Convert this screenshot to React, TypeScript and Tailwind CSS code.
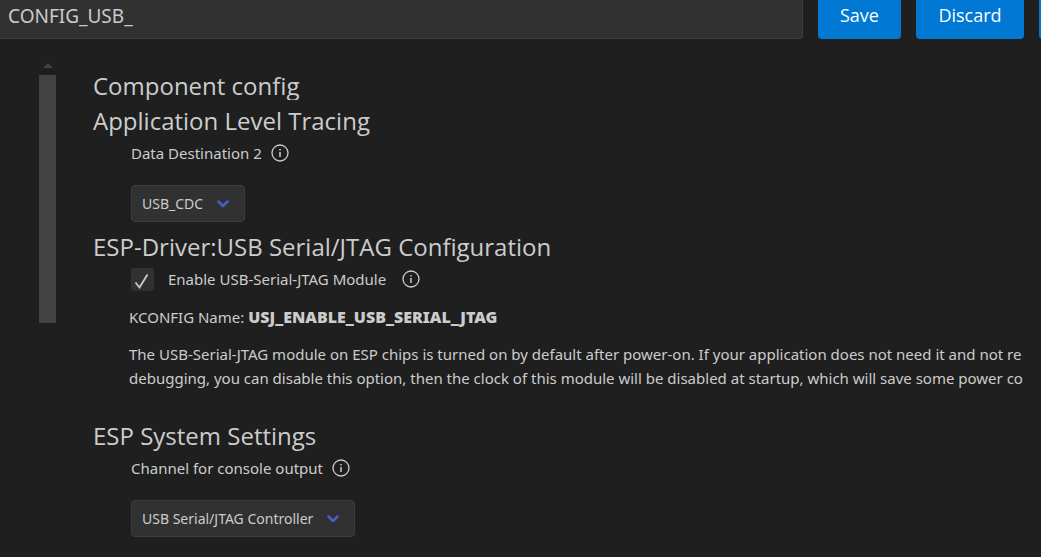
import React, { useState } from 'react';

const InfoIcon: React.FC = () => (
  <svg viewBox="0 0 18 18" className="size-[18px] shrink-0" fill="none" aria-hidden="true">
    <circle cx="9" cy="9" r="8" stroke="#cccccc" strokeWidth="1.3" />
    <path d="M9 8v5" stroke="#cccccc" strokeWidth="1.5" />
    <path d="M9 5v1.5" stroke="#cccccc" strokeWidth="1.5" />
  </svg>
);

const Heading: React.FC<{ children: React.ReactNode }> = ({ children }) => (
  <h2 className="whitespace-nowrap font-['Open_Sans',sans-serif] text-[24px] leading-[36px]">{children}</h2>
);

interface SelectSettingProps {
  id: string;
  label: string;
  option: string;
}

const SelectSetting: React.FC<SelectSettingProps> = ({ id, label, option }) => (
  <div className="pl-[37px]">
    <div className="flex h-[28px] items-center gap-[9px]">
      <label htmlFor={id}>{label}</label>
      <InfoIcon />
    </div>
    <div className="relative mt-[18px] inline-block">
      <select
        id={id}
        className="block h-[37px] appearance-none rounded border border-[#3c3c3c] bg-[#313131] pl-[10px] pr-10 text-[14px]"
      >
        <option>{option}</option>
      </select>
      <svg
        viewBox="0 0 12 8"
        className="pointer-events-none absolute right-4 top-[15px] h-2 w-3"
        fill="none"
        aria-hidden="true"
      >
        <path d="M1.5 1.5 6 6l4.500-4.500" stroke="#485fc7" strokeWidth="2.500" strokeLinecap="round" strokeLinejoin="round" />
      </svg>
    </div>
  </div>
);

const buttonClass = "h-[39px] shrink-0 rounded-b bg-[#0078d4] pb-2 font-['Open_Sans',sans-serif] text-[18px] text-white";

export default function App() {
  const [search, setSearch] = useState('CONFIG_USB_');
  const [enabled, setEnabled] = useState(true);

  return (
    <div className="min-h-screen overflow-hidden bg-[#1f1f1f] font-['Noto_Sans','Open_Sans',sans-serif] text-[15px] text-[#cccccc]">
      <header className="-mr-[81px] flex gap-[15px]">
        <input
          type="text"
          aria-label="Search parameter"
          value={search}
          onChange={(e) => setSearch(e.target.value)}
          className="h-[39px] min-w-0 flex-1 rounded-br border-b border-r border-[#3c3c3c] bg-[#313131] pb-[6px] pl-2 text-[19px] outline-none"
        />
        <button type="button" className={`${buttonClass} w-[83px]`}>Save</button>
        <button type="button" className={`${buttonClass} w-[108px]`}>Discard</button>
        <button type="button" aria-label="Reset" className={`${buttonClass} w-[83px]`} />
      </header>

      <div className="flex pl-[39px] pt-6">
        <div className="flex w-[17px] shrink-0 flex-col items-center">
          <svg viewBox="0 0 10 5" className="mb-[7px] h-[5px] w-[10px]" aria-hidden="true">
            <path d="M5 0 10 5H0z" fill="#424242" />
          </svg>
          <div className="h-[248px] w-full bg-[#424242]" />
        </div>

        <main className="min-w-0 flex-1 pl-[37px] pt-[5px]">
          <h1 className="h-[32px] overflow-hidden whitespace-nowrap font-['Open_Sans',sans-serif] text-[24px] leading-[36px]">
            Component config
          </h1>

          <section className="mt-[3px]">
            <Heading>Application Level Tracing</Heading>
            <div className="pl-px">
              <SelectSetting id="data-destination" label="Data Destination 2" option="USB_CDC" />
            </div>
          </section>

          <section className="mt-[7px]">
            <Heading>ESP-Driver:USB Serial/JTAG Configuration</Heading>
            <div className="flex h-[28px] items-center pl-[38px]">
              <span className="relative mr-[14px] size-[23px]">
                <input
                  id="enable-usj"
                  type="checkbox"
                  checked={enabled}
                  onChange={(e) => setEnabled(e.target.checked)}
                  className="block size-[23px] appearance-none rounded-[3px] bg-[#313131]"
                />
                {enabled && (
                  <svg viewBox="0 0 23 23" className="pointer-events-none absolute inset-0" fill="none" aria-hidden="true">
                    <path d="M4.500 14.500 8.500 19.500 16.500 6.500" stroke="#cccccc" strokeWidth="1.8" />
                  </svg>
                )}
              </span>
              <label htmlFor="enable-usj" className="mr-4">Enable USB-Serial-JTAG Module</label>
              <InfoIcon />
            </div>
            <div className="whitespace-nowrap pl-9 pt-3 leading-6">
              <p>
                KCONFIG Name: <strong className="text-[16px] font-black">USJ_ENABLE_USB_SERIAL_JTAG</strong>
              </p>
              <p className="mt-[13px]">
                The USB-Serial-JTAG module on ESP chips is turned on by default after power-on. If your application does not need it and not re
                <br />
                debugging, you can disable this option, then the clock of this module will be disabled at startup, which will save some power co
              </p>
            </div>
          </section>

          <section className="mt-7">
            <Heading>ESP System Settings</Heading>
            <div className="pl-px">
              <SelectSetting id="console-output" label="Channel for console output" option="USB Serial/JTAG Controller" />
            </div>
          </section>
        </main>
      </div>
    </div>
  );
}
